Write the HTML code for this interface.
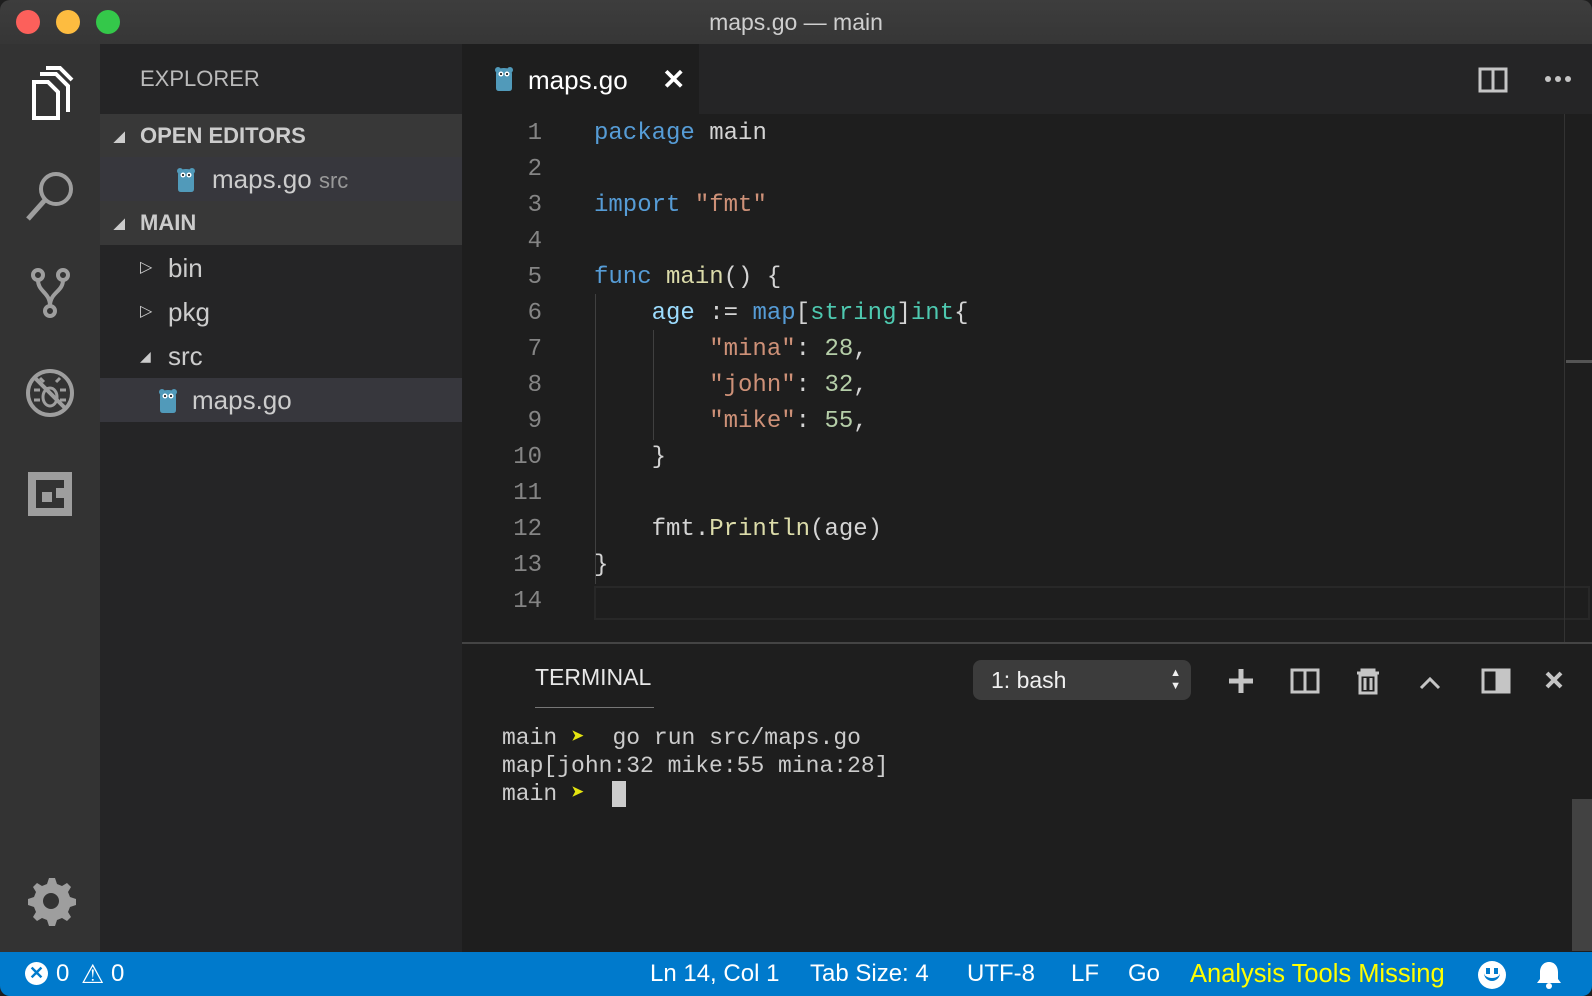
<!DOCTYPE html>
<html><head><meta charset="utf-8"><style>
*{margin:0;padding:0;box-sizing:border-box}
body{width:1592px;height:996px;overflow:hidden;background:#1e1e1e;font-family:"Liberation Sans",sans-serif;position:relative}
.a{position:absolute}
.mono{font-family:"Liberation Mono",monospace}
#title{left:0;top:0;width:1592px;height:44px;background:linear-gradient(#3d3d3d,#363636);border-radius:10px 10px 0 0;color:#cfcfcf;font-size:23px;text-align:center;line-height:44px}
.dot{width:24px;height:24px;border-radius:50%;top:10px}
#act{left:0;top:44px;width:100px;height:908px;background:#333333}
#side{left:100px;top:44px;width:362px;height:908px;background:#252526;color:#ccc}
.row{position:absolute;left:0;width:362px;height:44px;line-height:44px;font-size:26px}
.hdr{background:#383838;font-weight:bold;font-size:22px;color:#ccc}
.sel{background:#37373d}
#tabs{left:462px;top:44px;width:1130px;height:70px;background:#252526}
#tab{left:462px;top:44px;width:237px;height:70px;background:#1e1e1e;color:#fff;font-size:26px;line-height:72px}
.ln{position:absolute;left:462px;width:80px;text-align:right;color:#858585;font-size:24px;line-height:36px}
.cl{position:absolute;left:594px;font-size:24px;line-height:36px;color:#d4d4d4;white-space:pre}
.k{color:#569cd6}.s{color:#ce9178}.n{color:#b5cea8}.f{color:#dcdcaa}.v{color:#9cdcfe}.t{color:#4ec9b0}
.term{position:absolute;left:502px;font-size:23px;line-height:28px;color:#ccc;white-space:pre}
#status{left:0;top:952px;width:1592px;height:44px;background:#007acc;color:#fff;font-size:24px;line-height:44px;border-radius:0 0 10px 10px}
#status span{position:absolute;top:0}
.go{position:absolute}
</style></head><body>
<div id="title" class="a">maps.go — main</div>
<div class="a dot" style="left:16px;background:#fc605b"></div>
<div class="a dot" style="left:56px;background:#fdbc40"></div>
<div class="a dot" style="left:96px;background:#34c84a"></div>

<div id="act" class="a"></div>
<svg class="a" style="left:0;top:44px" width="100" height="908" fill="none" stroke-width="4">
 <g stroke="#fff"><path d="M34 38h14l10 10v26H34z"/><path d="M40 30h16l12 12v26"/><path d="M46 24h14l12 12"/></g>
 <g stroke="#9e9e9e"><circle cx="56" cy="145" r="15"/><path d="M45 156l-17 19" stroke-width="5"/>
 <circle cx="38" cy="231" r="5"/><circle cx="63" cy="231" r="5"/><circle cx="50" cy="267" r="5"/><path d="M38 236c0 12 12 12 12 26M63 236c0 12-13 12-13 26"/>
 <circle cx="50" cy="349" r="22"/><path d="M35 334l30 30"/><ellipse cx="50" cy="353" rx="7" ry="9" stroke-width="3"/><path d="M40 346h-6M60 346h6M40 356h-6M60 356h6M44 338l-4-4M56 338l4-4" stroke-width="3"/>
 </g>
 <g fill="#9e9e9e" stroke="none"><path d="M28 428h44v44H28zM36 436v28h28v-10h-8v-10h8v-8z"/><rect x="42" y="448" width="10" height="10"/></g>
 <g fill="#9e9e9e"><path d="M50 834l5 0 2 6 5 2 5-3 4 4-3 5 2 5 6 2v6l-6 2-2 5 3 5-4 4-5-3-5 2-2 6h-6l-2-6-5-2-5 3-4-4 3-5-2-5-6-2v-6l6-2 2-5-3-5 4-4 5 3 5-2 2-6z"/></g>
 <circle cx="51" cy="857" r="8" fill="#333"/>
</svg>

<div id="side" class="a">
 <div class="a" style="left:40px;top:22px;font-size:22px;color:#bbb">EXPLORER</div>
 <div class="row hdr" style="top:70px"><span style="position:absolute;left:14px;font-size:14px">◢</span><span style="position:absolute;left:40px">OPEN EDITORS</span></div>
 <div class="row sel" style="top:113px"><svg class="go" style="left:76px;top:10px" width="20" height="26"><circle cx="4" cy="4" r="3" fill="#519aba"/><circle cx="16" cy="4" r="3" fill="#519aba"/><path d="M2 8q0-6 8-6t8 6v14q0 3-3 3H5q-3 0-3-3z" fill="#519aba"/><circle cx="7" cy="8" r="2.5" fill="#fff"/><circle cx="13" cy="8" r="2.5" fill="#fff"/><circle cx="7" cy="8" r="1" fill="#000"/><circle cx="13" cy="8" r="1" fill="#000"/></svg><span style="position:absolute;left:112px">maps.go <span style="font-size:22px;color:#999">src</span></span></div>
 <div class="row hdr" style="top:157px"><span style="position:absolute;left:14px;font-size:14px">◢</span><span style="position:absolute;left:40px">MAIN</span></div>
 <div class="row" style="top:202px"><span style="position:absolute;left:40px;font-size:16px">▷</span><span style="position:absolute;left:68px">bin</span></div>
 <div class="row" style="top:246px"><span style="position:absolute;left:40px;font-size:16px">▷</span><span style="position:absolute;left:68px">pkg</span></div>
 <div class="row" style="top:290px"><span style="position:absolute;left:40px;font-size:14px">◢</span><span style="position:absolute;left:68px">src</span></div>
 <div class="row sel" style="top:334px"><svg class="go" style="left:58px;top:10px" width="20" height="26"><circle cx="4" cy="4" r="3" fill="#519aba"/><circle cx="16" cy="4" r="3" fill="#519aba"/><path d="M2 8q0-6 8-6t8 6v14q0 3-3 3H5q-3 0-3-3z" fill="#519aba"/><circle cx="7" cy="8" r="2.5" fill="#fff"/><circle cx="13" cy="8" r="2.5" fill="#fff"/><circle cx="7" cy="8" r="1" fill="#000"/><circle cx="13" cy="8" r="1" fill="#000"/></svg><span style="position:absolute;left:92px">maps.go</span></div>
</div>

<div id="tabs" class="a"></div>
<div id="tab" class="a"><svg class="go" style="left:32px;top:22px" width="20" height="26"><circle cx="4" cy="4" r="3" fill="#519aba"/><circle cx="16" cy="4" r="3" fill="#519aba"/><path d="M2 8q0-6 8-6t8 6v14q0 3-3 3H5q-3 0-3-3z" fill="#519aba"/><circle cx="7" cy="8" r="2.5" fill="#fff"/><circle cx="13" cy="8" r="2.5" fill="#fff"/><circle cx="7" cy="8" r="1" fill="#000"/><circle cx="13" cy="8" r="1" fill="#000"/></svg><span style="position:absolute;left:66px">maps.go</span><span style="position:absolute;left:200px;font-size:28px;font-weight:bold">✕</span></div>
<svg class="a" style="left:1478px;top:66px" width="100" height="30" fill="none" stroke="#c5c5c5" stroke-width="3"><rect x="2" y="3" width="26" height="22"/><path d="M15 3v22"/><g fill="#c5c5c5" stroke="none"><circle cx="70" cy="13" r="3"/><circle cx="80" cy="13" r="3"/><circle cx="90" cy="13" r="3"/></g></svg>

<div class="a" style="left:594px;top:586px;width:996px;height:34px;border:2px solid #282828"></div>
<div class="a" style="left:595px;top:294px;width:1px;height:290px;background:#404040"></div>
<div class="a" style="left:653px;top:330px;width:1px;height:110px;background:#404040"></div>
<div class="a" style="left:1564px;top:114px;width:1px;height:528px;background:#333"></div>
<div class="a" style="left:1566px;top:360px;width:26px;height:3px;background:#555"></div>

<div class="ln mono" style="top:116px">1</div><div class="ln mono" style="top:152px">2</div><div class="ln mono" style="top:188px">3</div><div class="ln mono" style="top:224px">4</div><div class="ln mono" style="top:260px">5</div><div class="ln mono" style="top:296px">6</div><div class="ln mono" style="top:332px">7</div><div class="ln mono" style="top:368px">8</div><div class="ln mono" style="top:404px">9</div><div class="ln mono" style="top:440px">10</div><div class="ln mono" style="top:476px">11</div><div class="ln mono" style="top:512px">12</div><div class="ln mono" style="top:548px">13</div><div class="ln mono" style="top:584px">14</div>
<div class="cl mono" style="top:116px"><span class="k">package</span> main</div>
<div class="cl mono" style="top:188px"><span class="k">import</span> <span class="s">"fmt"</span></div>
<div class="cl mono" style="top:260px"><span class="k">func</span> <span class="f">main</span>() {</div>
<div class="cl mono" style="top:296px">    <span class="v">age</span> := <span class="k">map</span>[<span class="t">string</span>]<span class="t">int</span>{</div>
<div class="cl mono" style="top:332px">        <span class="s">"mina"</span>: <span class="n">28</span>,</div>
<div class="cl mono" style="top:368px">        <span class="s">"john"</span>: <span class="n">32</span>,</div>
<div class="cl mono" style="top:404px">        <span class="s">"mike"</span>: <span class="n">55</span>,</div>
<div class="cl mono" style="top:440px">    }</div>
<div class="cl mono" style="top:512px">    fmt.<span class="f">Println</span>(age)</div>
<div class="cl mono" style="top:548px">}</div>

<div class="a" style="left:462px;top:642px;width:1130px;height:2px;background:#444"></div>
<div class="a" style="left:535px;top:664px;font-size:23px;color:#e7e7e7">TERMINAL</div>
<div class="a" style="left:535px;top:707px;width:119px;height:1px;background:#777"></div>
<div class="a" style="left:973px;top:660px;width:218px;height:40px;background:#3c3c3c;border-radius:8px;color:#f0f0f0;font-size:23px;line-height:40px;padding-left:18px">1: bash<span style="position:absolute;right:10px;top:0;font-size:11px;line-height:13px;padding-top:7px">▲<br>▼</span></div>
<svg class="a" style="left:1226px;top:664px" width="350" height="34" fill="none" stroke="#c5c5c5" stroke-width="3">
 <path d="M15 5v24M3 17h24" stroke-width="5"/>
 <rect x="66" y="6" width="26" height="22"/><path d="M79 6v22"/>
 <path d="M131 9h22M136 9v-3h12v3M134 11h16v18h-16zM139 14v12M145 14v12"/>
 <path d="M195 24l9-9 9 9"/>
 <rect x="257" y="6" width="26" height="22"/><rect x="271" y="6" width="12" height="22" fill="#c5c5c5"/>
 <path d="M321 9l14 14M335 9l-14 14" stroke-width="4"/>
</svg>
<div class="term mono" style="top:724px">main <span style="color:#e5e510">➤</span>  go run src/maps.go</div>
<div class="term mono" style="top:752px">map[john:32 mike:55 mina:28]</div>
<div class="term mono" style="top:780px">main <span style="color:#e5e510">➤</span>  <span style="background:#ccc"> </span></div>
<div class="a" style="left:1572px;top:799px;width:20px;height:152px;background:#424242"></div>

<div id="status" class="a">
 <span style="left:25px;top:10px;width:23px;height:23px;border-radius:50%;background:#fff;color:#007acc;font-size:18px;line-height:23px;text-align:center;font-weight:bold">✕</span>
 <span style="left:56px">0</span>
 <span style="left:81px;font-size:26px">⚠</span>
 <span style="left:111px">0</span>
 <span style="left:650px">Ln 14, Col 1</span>
 <span style="left:810px">Tab Size: 4</span>
 <span style="left:967px">UTF-8</span>
 <span style="left:1071px">LF</span>
 <span style="left:1128px">Go</span>
 <span style="left:1190px;color:#ffff00;font-size:25.5px">Analysis Tools Missing</span>
 <span style="left:1478px;top:9px;width:28px;height:28px;border-radius:50%;background:#fff"></span>
 <span style="left:1486px;top:16px;width:4px;height:6px;background:#007acc"></span>
 <span style="left:1494px;top:16px;width:4px;height:6px;background:#007acc"></span>
 <span style="left:1484px;top:19px;width:16px;height:10px;border-bottom:3px solid #007acc;border-radius:0 0 10px 10px"></span>
 <svg style="position:absolute;left:1536px;top:8px" width="26" height="30"><path d="M13 2c-6 0-9 5-9 10v7l-3 4h24l-3-4v-7c0-5-3-10-9-10z" fill="#fff"/><circle cx="13" cy="26" r="3" fill="#fff"/></svg>
</div>
</body></html>
